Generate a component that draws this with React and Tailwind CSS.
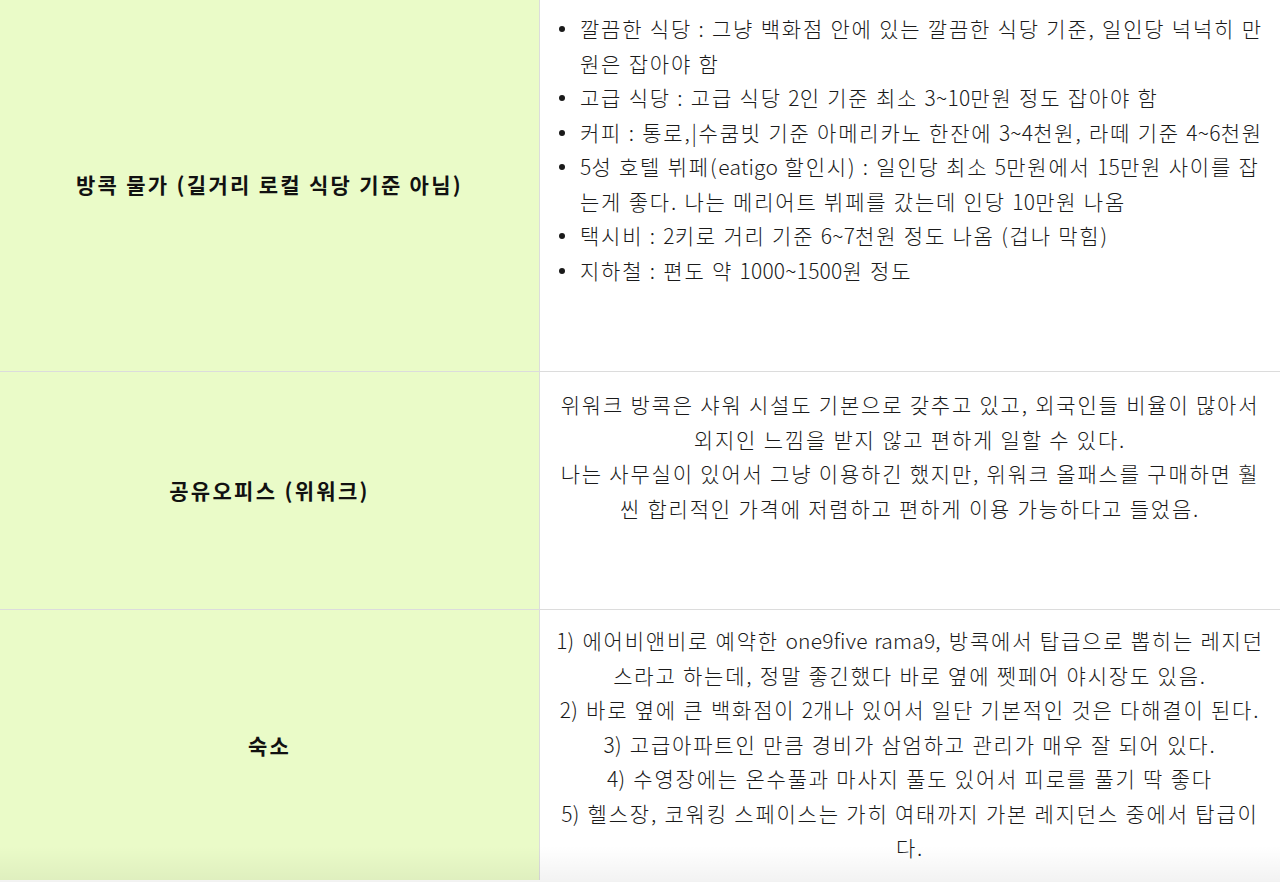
import React from "react";

const font = { fontFamily: '"Noto Sans CJK KR", "Noto Sans", sans-serif' };

function T({ children }) {
  const parts = children.split(/([A-Za-z0-9~]+)/);
  return parts.map((p, i) =>
    i % 2 === 1 ? (
      <span key={i} className="tracking-[0.2px]">
        {p}
      </span>
    ) : (
      <React.Fragment key={i}>{p}</React.Fragment>
    )
  );
}

const bullets = [
  "깔끔한 식당 : 그냥 백화점 안에 있는 깔끔한 식당 기준, 일인당 넉넉히 만원은 잡아야 함",
  "고급 식당 : 고급 식당 2인 기준 최소 3~10만원 정도 잡아야 함",
  "커피 : 통로,|수쿰빗 기준 아메리카노 한잔에 3~4천원, 라떼 기준 4~6천원",
  "5성 호텔 뷔페(eatigo 할인시) : 일인당 최소 5만원에서 15만원 사이를 잡는게 좋다. 나는 메리어트 뷔페를 갔는데 인당 10만원 나옴",
  "택시비 : 2키로 거리 기준 6~7천원 정도 나옴 (겁나 막힘)",
  "지하철 : 편도 약 1000~1500원 정도",
];

function Label({ children }) {
  return (
    <div className="w-[540px] shrink-0 bg-[#eafbc8] border-r border-[#dcdcdc] flex items-center justify-center font-bold text-[21px] tracking-[2.3px] text-[#111]">
      {children}
    </div>
  );
}

export default function App() {
  return (
    <div
      className="relative w-[1280px] h-[882px] overflow-hidden bg-white text-[#1a1a1a] text-[21px] tracking-[1.8px] leading-[34.5px] font-light"
      style={font}
    >
      <div className="flex flex-col -mt-[2px]">
        <div className="flex h-[374px] border-b border-[#dcdcdc]">
          <Label>방콕 물가 (길거리 로컬 식당 기준 아님)</Label>
          <div className="flex-1 pt-[13px] pl-[19px] pr-[14px]">
            <ul className="flex flex-col">
              {bullets.map((b, i) => (
                <li key={i} className="flex">
                  <span className="w-[21px] shrink-0 flex justify-start pt-[15px]">
                    <span className="block w-[6px] h-[6px] rounded-full bg-[#1a1a1a]" />
                  </span>
                  <span className="flex-1">
                    <T>{b}</T>
                  </span>
                </li>
              ))}
            </ul>
          </div>
        </div>
        <div className="flex h-[238px] border-b border-[#dcdcdc]">
          <Label>공유오피스 (위워크)</Label>
          <div className="flex-1 pt-[15px] px-[16px] text-center">
            <p>위워크 방콕은 샤워 시설도 기본으로 갖추고 있고, 외국인들 비율이 많아서 외지인 느낌을 받지 않고 편하게 일할 수 있다.</p>
            <p>나는 사무실이 있어서 그냥 이용하긴 했지만, 위워크 올패스를 구매하면 훨씬 합리적인 가격에 저렴하고 편하게 이용 가능하다고 들었음.</p>
          </div>
        </div>
        <div className="flex h-[270px]">
          <Label>숙소</Label>
          <div className="flex-1 pt-[13px] px-[16px] text-center">
            <p><T>1) 에어비앤비로 예약한 one9five rama9, 방콕에서 탑급으로 뽑히는 레지던스라고 하는데, 정말 좋긴했다 바로 옆에 쩻페어 야시장도 있음.</T></p>
            <p><T>2) 바로 옆에 큰 백화점이 2개나 있어서 일단 기본적인 것은 다해결이 된다.</T></p>
            <p><T>3) 고급아파트인 만큼 경비가 삼엄하고 관리가 매우 잘 되어 있다.</T></p>
            <p><T>4) 수영장에는 온수풀과 마사지 풀도 있어서 피로를 풀기 딱 좋다</T></p>
            <p><T>5) 헬스장, 코워킹 스페이스는 가히 여태까지 가본 레지던스 중에서 탑급이다.</T></p>
          </div>
        </div>
      </div>
      <div className="absolute left-0 right-0 bottom-0 h-[36px] bg-gradient-to-b from-transparent to-[rgba(0,0,0,0.05)] pointer-events-none" />
    </div>
  );
}
